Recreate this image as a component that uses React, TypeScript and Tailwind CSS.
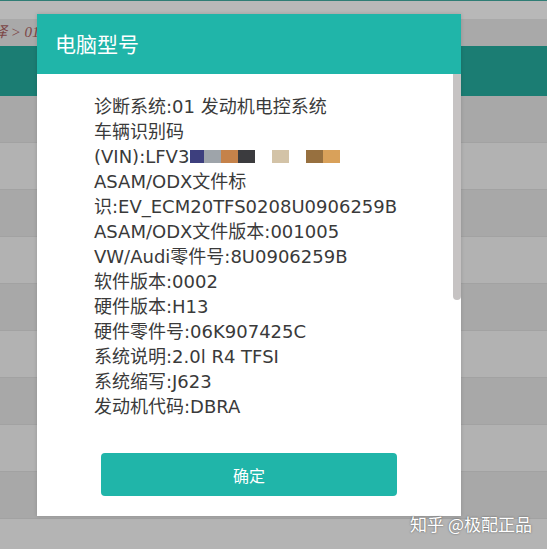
const lines = [
    "诊断系统:01 发动机电控系统",
    "车辆识别码",
    "VIN",
    "ASAM/ODX文件标",
    "识:EV_ECM20TFS0208U0906259B",
    "ASAM/ODX文件版本:001005",
    "VW/Audi零件号:8U0906259B",
    "软件版本:0002",
    "硬件版本:H13",
    "硬件零件号:06K907425C",
    "系统说明:2.0l R4 TFSI",
    "系统缩写:J623",
    "发动机代码:DBRA",
];

// blurred-out part of the VIN
const blobs = [
    { w: 14, c: "#3d3f7e", gap: 0 },
    { w: 17, c: "#9ea4aa", gap: 0 },
    { w: 17, c: "#c5824a", gap: 0 },
    { w: 17, c: "#3b3b3e", gap: 0 },
    { w: 17, c: "#d3c3a7", gap: 17 },
    { w: 17, c: "#97703f", gap: 17 },
    { w: 17, c: "#d9a15a", gap: 0 },
];

const rows = Array.from({ length: 9 }, (_, i) => i);

export default function App() {
    const font = { fontFamily: '"DejaVu Sans", "Noto Sans CJK SC", sans-serif' };

    return (
        <div className="relative w-full h-[549px] overflow-hidden bg-[#b4b4b4]" style={font}>
            {/* page behind the overlay */}
            <div className="flex flex-col">
                <div className="h-px bg-[#2f7d75]" />
                <div className="h-[18px] bg-[#b8b8b8]" />
                <div className="h-[27px] bg-[#a9a9a9] flex items-center">
                    <div className="w-[37px] overflow-hidden">
                        <span className="block ml-[-8px] whitespace-nowrap italic text-[15px] text-[#7c4646]" style={{ fontFamily: '"Liberation Serif", "Noto Sans CJK SC", serif' }}>
                            择 &gt; 01
                        </span>
                    </div>
                </div>
                <div className="h-[50px] bg-[#1b7d73]" />
                {rows.map((i) => (
                    <div
                        key={i}
                        className={`h-[47px] border-b border-[#a2a2a2] ${i % 2 === 0 ? "bg-[#a8a8a8]" : "bg-[#b2b2b2]"}`}
                    />
                ))}
            </div>

            {/* dialog */}
            <div className="absolute left-[37px] top-[14px] w-[424px] h-[502px] bg-white flex flex-col shadow-[0_0_4px_rgba(0,0,0,0.15)]">
                <div className="h-[60px] shrink-0 bg-[#20b5a9] flex items-center pl-[18px]">
                    <span className="text-white text-[21px]" style={{ fontFamily: '"Noto Sans CJK SC", sans-serif' }}>电脑型号</span>
                </div>

                <div className="relative h-[350px] shrink-0 overflow-hidden">
                    <div className="pl-[57px] pt-[20px] text-[18px] leading-[25px] text-[#3a3a3a]">
                        {lines.map((line) =>
                            line === "VIN" ? (
                                <div key={line} className="flex items-center whitespace-nowrap">
                                    <span>(VIN):LFV3</span>
                                    <span className="flex items-center ml-[1px] blur-[0.6px]">
                                        {blobs.map((b, i) => (
                                            <span
                                                key={i}
                                                className="h-[13px] inline-block"
                                                style={{ width: b.w, backgroundColor: b.c, marginLeft: b.gap }}
                                            />
                                        ))}
                                    </span>
                                </div>
                            ) : (
                                <div key={line} className="whitespace-nowrap">{line}</div>
                            )
                        )}
                    </div>
                    {/* scrollbar thumb */}
                    <div className="absolute right-0 top-0 w-[8px] h-[226px] bg-[#c6c3c3] rounded-b-[4px]" />
                </div>

                <div className="px-[64px] pt-[29px]">
                    <button className="w-full h-[43px] rounded-[4px] bg-[#20b5a9] text-white text-[16px]" style={{ fontFamily: '"Noto Sans CJK SC", sans-serif' }}>
                        确定
                    </button>
                </div>
            </div>

            {/* watermark */}
            <div
                className="absolute right-[15px] bottom-[13px] text-white text-[17px] [text-shadow:0_0_2px_rgba(0,0,0,0.55)]"
                style={{ fontFamily: '"Noto Sans CJK SC", sans-serif' }}
            >
                知乎 @极配正品
            </div>
        </div>
    );
}
